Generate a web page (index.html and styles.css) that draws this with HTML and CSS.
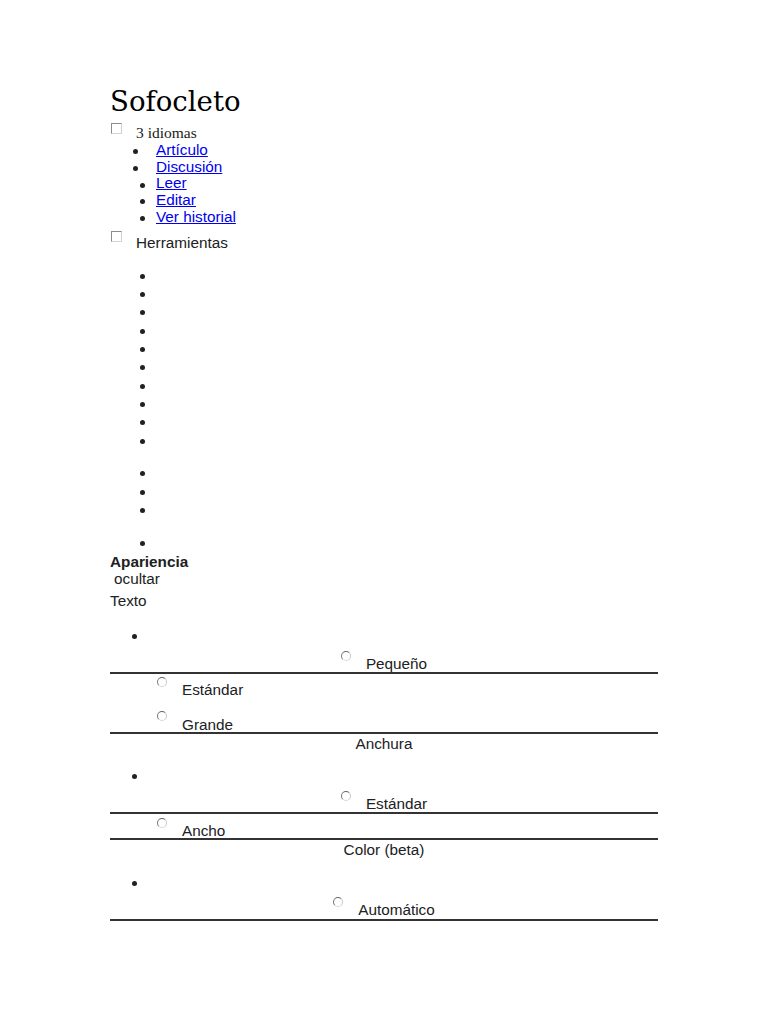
FILE: index.html
```html
<!DOCTYPE html>
<html lang="es">
<head>
<meta charset="utf-8">
<title>Sofocleto</title>
<link rel="stylesheet" href="styles.css">
</head>
<body>
<main class="page">
  <h1 class="title">Sofocleto</h1>

  <div class="toggle toggle--lang">
    <span class="checkbox"></span>
    <span class="toggle-label">3 idiomas</span>
  </div>

  <ul class="nav">
    <li class="nav-item"><span class="marker"><span class="dot"></span></span><a href="#">Artículo</a></li>
    <li class="nav-item"><span class="marker"><span class="dot"></span></span><a href="#">Discusión</a></li>
    <li class="nav-item nav-item--inner"><span class="marker"><span class="dot"></span></span><a href="#">Leer</a></li>
    <li class="nav-item nav-item--inner"><span class="marker"><span class="dot"></span></span><a href="#">Editar</a></li>
    <li class="nav-item nav-item--inner"><span class="marker"><span class="dot"></span></span><a href="#">Ver historial</a></li>
  </ul>

  <div class="toggle toggle--tools">
    <span class="checkbox"></span>
    <span class="toggle-label">Herramientas</span>
  </div>

  <ul class="bullets bullets--first">
    <li class="bullet"><span class="dot"></span></li>
    <li class="bullet"><span class="dot"></span></li>
    <li class="bullet"><span class="dot"></span></li>
    <li class="bullet"><span class="dot"></span></li>
    <li class="bullet"><span class="dot"></span></li>
    <li class="bullet"><span class="dot"></span></li>
    <li class="bullet"><span class="dot"></span></li>
    <li class="bullet"><span class="dot"></span></li>
    <li class="bullet"><span class="dot"></span></li>
    <li class="bullet"><span class="dot"></span></li>
  </ul>
  <ul class="bullets bullets--second">
    <li class="bullet bullet--tall"><span class="dot"></span></li>
    <li class="bullet bullet--tall"><span class="dot"></span></li>
    <li class="bullet bullet--tall"><span class="dot"></span></li>
  </ul>
  <ul class="bullets bullets--third">
    <li class="bullet bullet--tall"><span class="dot"></span></li>
  </ul>

  <div class="heading">Apariencia</div>
  <div class="hide">ocultar</div>
  <div class="label">Texto</div>

  <ul class="choice-dot choice-dot--text"><li class="choice-dot-item"><span class="dot"></span></li></ul>
  <div class="opt opt--center"><span class="radio"></span><span class="opt-text">Pequeño</span></div>
  <div class="rule"></div>
  <div class="opt opt--indent opt--after-rule"><span class="radio"></span><span class="opt-text">Estándar</span></div>
  <div class="opt opt--indent opt--second"><span class="radio"></span><span class="opt-text opt-text--low">Grande</span></div>
  <div class="rule"></div>

  <div class="label label--center">Anchura</div>
  <ul class="choice-dot choice-dot--width"><li class="choice-dot-item"><span class="dot"></span></li></ul>
  <div class="opt opt--center"><span class="radio"></span><span class="opt-text">Estándar</span></div>
  <div class="rule"></div>
  <div class="opt opt--indent opt--after-rule-b"><span class="radio"></span><span class="opt-text">Ancho</span></div>
  <div class="rule rule--tight"></div>

  <div class="label label--center label--tight">Color (beta)</div>
  <ul class="choice-dot choice-dot--color"><li class="choice-dot-item"><span class="dot"></span></li></ul>
  <div class="opt opt--center opt--auto"><span class="radio"></span><span class="opt-text">Automático</span></div>
  <div class="rule rule--last"></div>
</main>
</body>
</html>
```

FILE: styles.css
```css
html, body {
  margin: 0;
  padding: 0;
  background: #ffffff;
}

.page {
  margin-left: 110px;
  width: 548px;
  padding-top: 86px;
  font-family: "Liberation Sans", Arial, sans-serif;
  font-size: 15.3px;
  line-height: 16.67px;
  color: #202122;
}

.title {
  margin: 0;
  font-family: "DejaVu Serif", serif;
  font-weight: 400;
  font-size: 27.6px;
  line-height: 32px;
  color: #000000;
}

/* checkbox toggles */
.toggle {
  display: flex;
  align-items: flex-start;
}

.toggle--lang {
  margin-top: 6px;
  height: 17px;
  font-family: "Liberation Serif", "Times New Roman", serif;
  font-size: 15.5px;
  line-height: 17px;
}

.toggle--tools {
  margin-top: 9px;
  height: 16.67px;
}

.toggle--tools .toggle-label {
  padding-top: 1px;
}

.checkbox {
  box-sizing: border-box;
  width: 11px;
  height: 11px;
  margin-left: 1px;
  margin-right: 14px;
  border: 1px solid;
  border-color: #8c8c8c #cfcfcf #d4d4d4 #8c8c8c;
  background: #ffffff;
  flex: none;
}

.toggle--lang .checkbox {
  margin-top: -1px;
}

.toggle--tools .checkbox {
  margin-top: -2.2px;
}

/* nav list */
.nav {
  list-style: none;
  margin: 0.4px 0 0;
  padding: 0;
}

.nav-item {
  display: flex;
  align-items: flex-start;
  height: 16.67px;
}

.nav-item a {
  padding-top: 0.6px;
  color: #0000ee;
  text-decoration: underline;
}

.marker {
  display: flex;
  justify-content: flex-end;
  box-sizing: border-box;
  width: 46px;
  padding-right: 18px;
  padding-top: 8px;
  flex: none;
}

.nav-item--inner .marker {
  padding-right: 11px;
}

.dot {
  display: block;
  width: 5px;
  height: 5px;
  border-radius: 50%;
  background: #202122;
  flex: none;
}

/* empty bullet lists */
.bullets {
  list-style: none;
  margin: 0;
  padding: 0;
}

.bullets--first {
  margin-top: 16.6px;
}

.bullets--second {
  margin-top: 14.5px;
}

.bullets--third {
  margin-top: 14.8px;
}

.bullet {
  display: flex;
  align-items: center;
  height: 18.33px;
  padding-left: 30px;
}

.bullet--tall {
  height: 18.4px;
}

.heading {
  margin-top: 0.5px;
  font-weight: 700;
  line-height: 15.5px;
}

.hide {
  margin-top: 1.6px;
  padding-left: 4px;
}

.label {
  margin-top: 6.1px;
}

.label--center {
  margin-top: 0.6px;
  padding-top: 2px;
  text-align: center;
}

.label--tight {
  margin-top: 0.3px;
}

/* single bullet before each option group */
.choice-dot {
  list-style: none;
  margin: 0;
  padding: 0;
}

.choice-dot-item {
  display: flex;
  align-items: center;
  height: 18.33px;
  padding-left: 21.5px;
}

.choice-dot--text {
  margin-top: 17.2px;
}

.choice-dot--width {
  margin-top: 14.2px;
}

.choice-dot--color {
  margin-top: 15.4px;
}

/* radio options */
.opt {
  display: flex;
  align-items: flex-start;
  height: 16.67px;
  margin-top: 8.8px;
}

.opt-text {
  padding-top: 1.8px;
}

.opt-text--low {
  padding-top: 2.8px;
}

.opt--center {
  justify-content: center;
}

.opt--auto {
  margin-top: 7.6px;
}

.opt--indent {
  padding-left: 47px;
}

.opt--after-rule {
  margin-top: 6.4px;
}

.opt--second {
  margin-top: 17.3px;
}

.opt--after-rule-b {
  margin-top: 7.5px;
}

.radio {
  box-sizing: border-box;
  width: 10px;
  height: 10px;
  margin-top: -3.5px;
  margin-right: 15px;
  border-radius: 50%;
  border: 1px solid;
  border-color: #666666 #c8c8c8 #d8d8d8 #767676;
  background: #ffffff;
  flex: none;
}

.rule {
  height: 2px;
  margin-top: 0.9px;
  background: #333333;
}

.rule--tight {
  margin-top: 0;
}

.rule--last {
  margin-top: 1.7px;
}
```
